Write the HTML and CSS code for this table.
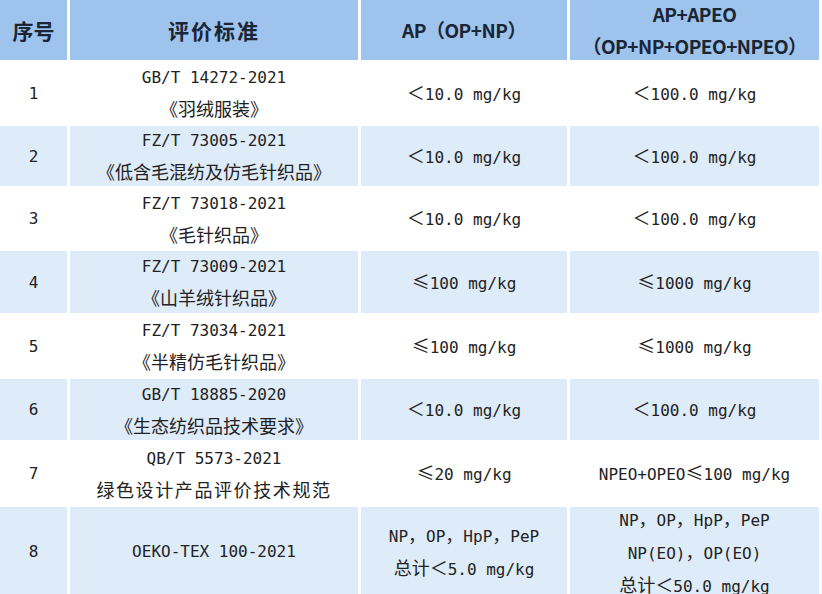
FILE: index.html
```html
<!DOCTYPE html>
<html lang="zh">
<head>
<meta charset="utf-8">
<link rel="stylesheet" href="styles.css">
</head>
<body>
<div class="table">
  <div class="cell head"><span class="zh-h">序号</span></div>
  <div class="cell head"><span class="zh-h wide">评价标准</span></div>
  <div class="cell head"><span class="hl">AP（OP+NP）</span></div>
  <div class="cell head"><span class="hl">AP+APEO</span><span class="hl">（OP+NP+OPEO+NPEO）</span></div>

  <div class="cell"><span>1</span></div>
  <div class="cell"><span>GB/T 14272-2021</span><span class="zh">《羽绒服装》</span></div>
  <div class="cell"><span><span class="zh">＜</span>10.0 mg/kg</span></div>
  <div class="cell"><span><span class="zh">＜</span>100.0 mg/kg</span></div>

  <div class="cell alt"><span>2</span></div>
  <div class="cell alt"><span>FZ/T 73005-2021</span><span class="zh">《低含毛混纺及仿毛针织品》</span></div>
  <div class="cell alt"><span><span class="zh">＜</span>10.0 mg/kg</span></div>
  <div class="cell alt"><span><span class="zh">＜</span>100.0 mg/kg</span></div>

  <div class="cell"><span>3</span></div>
  <div class="cell"><span>FZ/T 73018-2021</span><span class="zh">《毛针织品》</span></div>
  <div class="cell"><span><span class="zh">＜</span>10.0 mg/kg</span></div>
  <div class="cell"><span><span class="zh">＜</span>100.0 mg/kg</span></div>

  <div class="cell alt"><span>4</span></div>
  <div class="cell alt"><span>FZ/T 73009-2021</span><span class="zh">《山羊绒针织品》</span></div>
  <div class="cell alt"><span><span class="zh">≤</span>100 mg/kg</span></div>
  <div class="cell alt"><span><span class="zh">≤</span>1000 mg/kg</span></div>

  <div class="cell"><span>5</span></div>
  <div class="cell"><span>FZ/T 73034-2021</span><span class="zh">《半精仿毛针织品》</span></div>
  <div class="cell"><span><span class="zh">≤</span>100 mg/kg</span></div>
  <div class="cell"><span><span class="zh">≤</span>1000 mg/kg</span></div>

  <div class="cell alt"><span>6</span></div>
  <div class="cell alt"><span>GB/T 18885-2020</span><span class="zh">《生态纺织品技术要求》</span></div>
  <div class="cell alt"><span><span class="zh">＜</span>10.0 mg/kg</span></div>
  <div class="cell alt"><span><span class="zh">＜</span>100.0 mg/kg</span></div>

  <div class="cell"><span>7</span></div>
  <div class="cell"><span>QB/T 5573-2021</span><span class="zh spaced">绿色设计产品评价技术规范</span></div>
  <div class="cell"><span><span class="zh">≤</span>20 mg/kg</span></div>
  <div class="cell"><span>NPEO+OPEO<span class="zh">≤</span>100 mg/kg</span></div>

  <div class="cell alt tall"><span>8</span></div>
  <div class="cell alt tall"><span>OEKO-TEX 100-2021</span></div>
  <div class="cell alt tall"><span>NP<span class="zh">，</span>OP<span class="zh">，</span>HpP<span class="zh">，</span>PeP</span><span><span class="zh">总计＜</span>5.0 mg/kg</span></div>
  <div class="cell alt tall"><span>NP<span class="zh">，</span>OP<span class="zh">，</span>HpP<span class="zh">，</span>PeP</span><span>NP(EO)<span class="zh">，</span>OP(EO)</span><span><span class="zh">总计＜</span>50.0 mg/kg</span></div>
</div>
</body>
</html>
```

FILE: styles.css
```css
html, body {
  margin: 0;
  padding: 0;
  background: #ffffff;
  overflow: hidden;
}

.table {
  display: grid;
  grid-template-columns: 67px 288px 206px 249px;
  grid-template-rows: 60px 62px 60px 61px 62px 62px 61px 63px 90px;
  column-gap: 3px;
  row-gap: 2px;
  width: 819px;
}

.cell {
  display: flex;
  flex-direction: column;
  align-items: center;
  justify-content: center;
  background: #ffffff;
  color: #222222;
  font-family: "DejaVu Sans Mono", "Noto Sans CJK SC", monospace;
  font-size: 16px;
  line-height: 31px;
  white-space: nowrap;
}

.cell.alt {
  background: #deebf8;
}

.cell.tall {
  line-height: 30px;
}

.cell.head {
  background: #9ec3ec;
  color: #1a2535;
  line-height: 32px;
}

.zh {
  font-family: "Noto Sans CJK SC", sans-serif;
  font-size: 18px;
}

.zh.spaced {
  letter-spacing: 1.6px;
}

.zh-h {
  font-family: "Noto Sans CJK SC", sans-serif;
  font-weight: 700;
  font-size: 21px;
}

.zh-h.wide {
  letter-spacing: 2px;
}

.hl {
  font-family: "Noto Sans CJK SC", sans-serif;
  font-weight: 700;
  font-size: 19px;
  letter-spacing: -0.5px;
}
```
